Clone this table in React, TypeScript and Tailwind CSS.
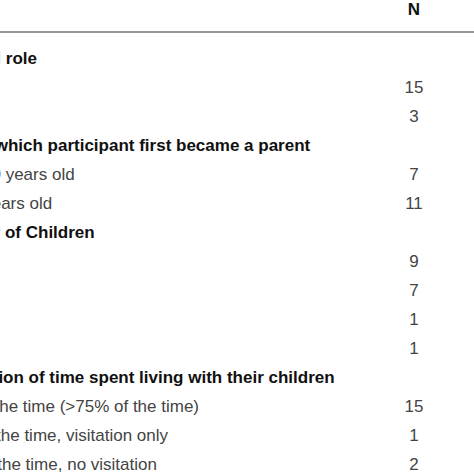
import React from "react";

type Row = { label: string; n?: string; bold?: boolean; ml: string };

const rows: Row[] = [
  { label: "Parental role", bold: true, ml: "ml-[-66px]" },
  { label: "Mother", n: "15", ml: "ml-[-80px]" },
  { label: "Father", n: "3", ml: "ml-[-80px]" },
  { label: "Age at which participant first became a parent", bold: true, ml: "ml-[-62px]" },
  { label: "Under 20 years old", n: "7", ml: "ml-[-69px]" },
  { label: "Over 20 years old", n: "11", ml: "ml-[-82px]" },
  { label: "Number of Children", bold: true, ml: "ml-[-64px]" },
  { label: "1", n: "9", ml: "ml-[-80px]" },
  { label: "2", n: "7", ml: "ml-[-80px]" },
  { label: "3", n: "1", ml: "ml-[-80px]" },
  { label: "4", n: "1", ml: "ml-[-80px]" },
  { label: "Proportion of time spent living with their children", bold: true, ml: "ml-[-63px]" },
  { label: "Most of the time (>75% of the time)", n: "15", ml: "ml-[-66px]" },
  { label: "Some of the time, visitation only", n: "1", ml: "ml-[-72px]" },
  { label: "None of the time, no visitation", n: "2", ml: "ml-[-67px]" },
];

export default function App() {
  return (
    <div
      className="w-[474px] h-[474px] overflow-hidden bg-white text-[17px]"
      style={{ fontFamily: '"Liberation Sans", Arial, Helvetica, sans-serif' }}
    >
      <div className="grid grid-cols-[1fr_60px] pr-[30px] h-[31px] leading-[20px]">
        <div />
        <div className="text-center font-bold text-[#111]">N</div>
      </div>
      <div className="h-[2px] bg-[#979797]" />
      <div className="pt-[11px]">
        {rows.map((r, i) => (
          <div key={i} className="grid grid-cols-[1fr_60px] pr-[30px] h-[29px] leading-[29px]">
            <div className="overflow-hidden">
              <div
                className={`${r.ml} whitespace-nowrap ${
                  r.bold ? "font-bold text-[#111]" : "text-[#444]"
                }`}
              >
                {r.label}
              </div>
            </div>
            <div className="text-center text-[#444]">{r.n ?? ""}</div>
          </div>
        ))}
      </div>
    </div>
  );
}
